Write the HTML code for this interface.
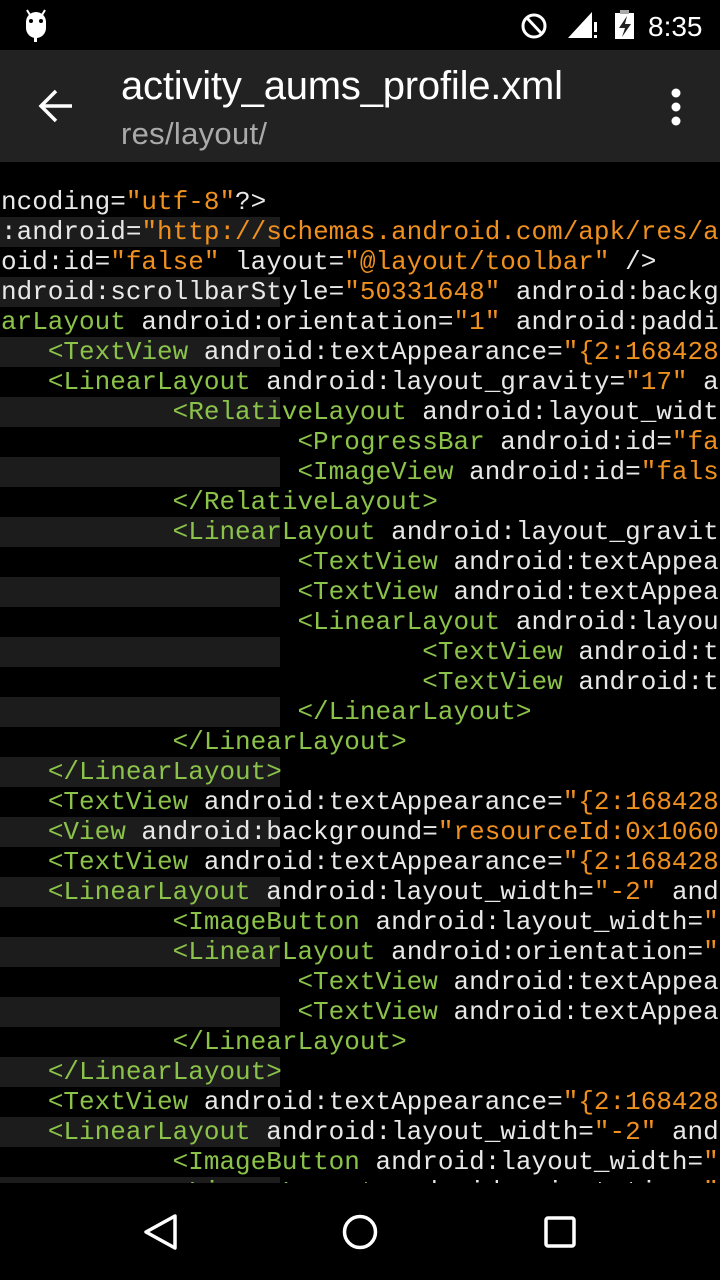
<!DOCTYPE html>
<html><head><meta charset="utf-8"><style>
*{margin:0;padding:0;box-sizing:border-box}
body{width:720px;height:1280px;background:#000;overflow:hidden;position:relative;font-family:"Liberation Sans",sans-serif}
.sb{position:absolute;top:0;left:0;width:720px;height:50px;background:#000}
.tb{position:absolute;top:50px;left:0;width:720px;height:112px;background:#222}
.title{position:absolute;left:121px;top:14px;font-size:40px;color:#fff;letter-spacing:-0.2px}
.sub{position:absolute;left:121px;top:66px;font-size:31px;color:#aaa;letter-spacing:0.3px}
.code{position:absolute;top:187px;left:0;width:720px;height:996px;overflow:hidden}
.r{height:30px;line-height:30px;white-space:pre;font-family:"Liberation Mono",monospace;font-size:26px;color:#e8e8e8;position:relative;padding-left:1px}
.r.o::before{content:"";position:absolute;left:0;top:0;width:280px;height:30px;background:#1c1c1c;z-index:-1}
.g{color:#8bc34a}.s{color:#f0901e}
.nav{position:absolute;top:1185px;left:0;width:720px;height:95px;background:#000}
</style></head><body>
<div class="sb">
<svg width="720" height="50" style="position:absolute;left:0;top:0">
<g fill="#fff"><path d="M26 22 a10 10 0 0 1 20 0 v6 a10 10 0 0 1 -20 0z"/><rect x="34" y="30" width="3" height="12"/>
<line x1="27" y1="10" x2="30" y2="15" stroke="#fff" stroke-width="2"/><line x1="45" y1="10" x2="42" y2="15" stroke="#fff" stroke-width="2"/></g>
<circle cx="31" cy="21" r="2" fill="#000"/><circle cx="41" cy="21" r="2" fill="#000"/>
<circle cx="534" cy="26" r="11" fill="none" stroke="#fff" stroke-width="3"/><line x1="527" y1="18" x2="542" y2="34" stroke="#fff" stroke-width="3"/>
<path d="M568 38 L592 12 V38 Z" fill="#fff"/><rect x="594" y="22" width="3" height="10" fill="#fff"/><rect x="594" y="35" width="3" height="3" fill="#fff"/>
<rect x="615" y="13" width="19" height="26" fill="#fff"/><rect x="620" y="10" width="9" height="4" fill="#aaa"/><path d="M627 16 L619 28 H625 L622 37 L631 24 H625 Z" fill="#222"/>
<text x="648" y="36" fill="#fff" font-size="28" font-family="Liberation Sans">8:35</text>
</svg></div>
<div class="tb">
<svg width="720" height="112" style="position:absolute;left:0;top:0">
<path d="M72 56 H42 M56 41 L41 56 L56 71" stroke="#fff" stroke-width="3.5" fill="none"/>
<circle cx="676" cy="43" r="4.5" fill="#fff"/><circle cx="676" cy="57" r="4.5" fill="#fff"/><circle cx="676" cy="71" r="4.5" fill="#fff"/>
</svg>
<div class="title">activity_aums_profile.xml</div>
<div class="sub">res/layout/</div>
</div>
<div class="code">
<div class="r">ncoding=<span class="s">"utf-8"</span>?&gt;</div>
<div class="r o">:android=<span class="s">"http://schemas.android.com/apk/res/a</span></div>
<div class="r">oid:id=<span class="s">"false"</span> layout=<span class="s">"@layout/toolbar"</span> /&gt;</div>
<div class="r o">ndroid:scrollbarStyle=<span class="s">"50331648"</span> android:backg</div>
<div class="r"><span class="g">arLayout</span> android:orientation=<span class="s">"1"</span> android:paddi</div>
<div class="r o">   <span class="g">&lt;TextView</span> android:textAppearance=<span class="s">"{2:168428</span></div>
<div class="r">   <span class="g">&lt;LinearLayout</span> android:layout_gravity=<span class="s">"17"</span> a</div>
<div class="r o">           <span class="g">&lt;RelativeLayout</span> android:layout_widt</div>
<div class="r">                   <span class="g">&lt;ProgressBar</span> android:id=<span class="s">"fa</span></div>
<div class="r o">                   <span class="g">&lt;ImageView</span> android:id=<span class="s">"fals</span></div>
<div class="r">           <span class="g">&lt;/RelativeLayout&gt;</span></div>
<div class="r o">           <span class="g">&lt;LinearLayout</span> android:layout_gravit</div>
<div class="r">                   <span class="g">&lt;TextView</span> android:textAppea</div>
<div class="r o">                   <span class="g">&lt;TextView</span> android:textAppea</div>
<div class="r">                   <span class="g">&lt;LinearLayout</span> android:layou</div>
<div class="r o">                           <span class="g">&lt;TextView</span> android:te</div>
<div class="r">                           <span class="g">&lt;TextView</span> android:te</div>
<div class="r o">                   <span class="g">&lt;/LinearLayout&gt;</span></div>
<div class="r">           <span class="g">&lt;/LinearLayout&gt;</span></div>
<div class="r o">   <span class="g">&lt;/LinearLayout&gt;</span></div>
<div class="r">   <span class="g">&lt;TextView</span> android:textAppearance=<span class="s">"{2:168428</span></div>
<div class="r o">   <span class="g">&lt;View</span> android:background=<span class="s">"resourceId:0x1060</span></div>
<div class="r">   <span class="g">&lt;TextView</span> android:textAppearance=<span class="s">"{2:168428</span></div>
<div class="r o">   <span class="g">&lt;LinearLayout</span> android:layout_width=<span class="s">"-2"</span> and</div>
<div class="r">           <span class="g">&lt;ImageButton</span> android:layout_width=<span class="s">"</span></div>
<div class="r o">           <span class="g">&lt;LinearLayout</span> android:orientation=<span class="s">"</span></div>
<div class="r">                   <span class="g">&lt;TextView</span> android:textAppea</div>
<div class="r o">                   <span class="g">&lt;TextView</span> android:textAppea</div>
<div class="r">           <span class="g">&lt;/LinearLayout&gt;</span></div>
<div class="r o">   <span class="g">&lt;/LinearLayout&gt;</span></div>
<div class="r">   <span class="g">&lt;TextView</span> android:textAppearance=<span class="s">"{2:168428</span></div>
<div class="r o">   <span class="g">&lt;LinearLayout</span> android:layout_width=<span class="s">"-2"</span> and</div>
<div class="r">           <span class="g">&lt;ImageButton</span> android:layout_width=<span class="s">"</span></div>
<div class="r o">           <span class="g">&lt;LinearLayout</span> android:orientation=<span class="s">"</span></div>
</div>
<div class="nav">
<svg width="720" height="95" style="position:absolute;left:0;top:0">
<path d="M175 31 L146 47 L175 63 Z" fill="none" stroke="#fff" stroke-width="3.5" stroke-linejoin="round"/>
<circle cx="360" cy="47" r="15.5" fill="none" stroke="#fff" stroke-width="3.5"/>
<rect x="546" y="33" width="28" height="28" rx="2" fill="none" stroke="#fff" stroke-width="3.5"/>
</svg></div>
</body></html>
